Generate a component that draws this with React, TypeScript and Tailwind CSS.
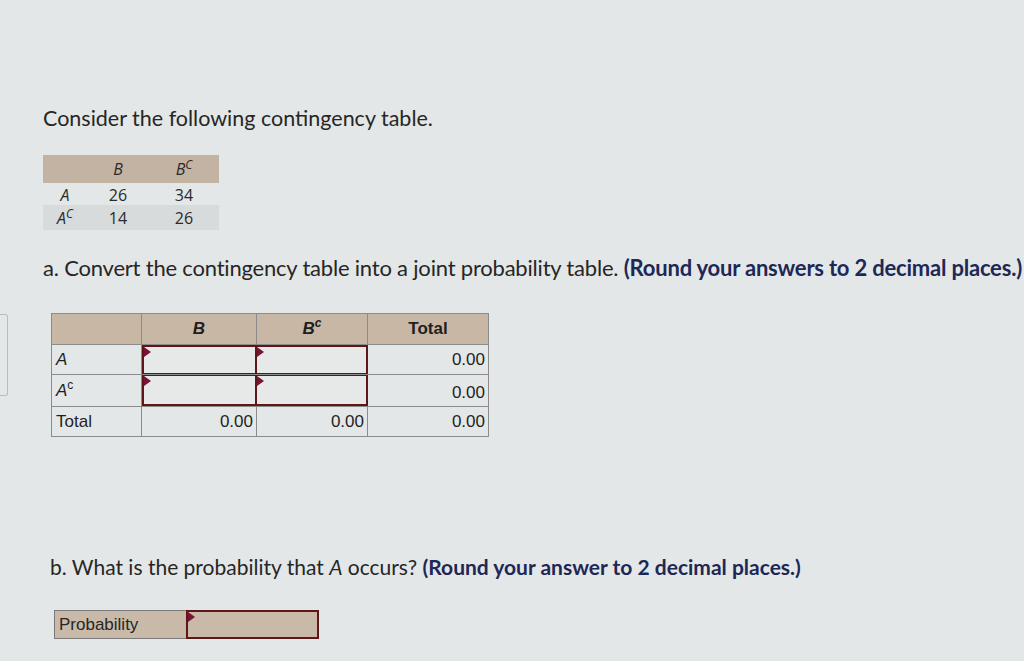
import React from "react";

const Flag = () => (
  <span className="absolute left-0 top-0 w-0 h-0 border-t-[5px] border-b-[5px] border-l-[7px] border-t-transparent border-b-transparent border-l-[#7a1232]" />
);

const InputCell = ({ cls }: { cls: string }) => (
  <div className={`relative ${cls} border-[#5e1616] bg-[#e6e9e8]`}>
    <Flag />
  </div>
);

export default function App() {
  const lato = { fontFamily: "Lato, 'Open Sans', sans-serif" };
  const arial = { fontFamily: "'Liberation Sans', Arial, sans-serif" };
  const cellB = "border-[#8c8c8c]";
  return (
    <div className="w-[1024px] h-[661px] bg-[#e4e7e7] overflow-hidden text-[#262626] relative">
      <div className="absolute left-0 top-[314px] w-[8px] h-[82px] border border-[#b9bcbc] rounded-r-[3px] border-l-0" />
      <div className="pl-[43px] pt-[105px]" style={lato}>
        <p className="text-[21.5px] leading-[26px] whitespace-nowrap">Consider the following contingency table.</p>

        <div className="mt-[24px] w-[176px] text-[16px] text-[#2a2a2a]" style={{ fontFamily: "'Open Sans', sans-serif" }}>
          <div className="grid grid-cols-[44px_62px_70px] h-[28px] bg-[#c3b3a2] items-center">
            <span />
            <span className="text-center italic">B</span>
            <span className="text-center italic">B<sup className="text-[12px]">C</sup></span>
          </div>
          <div className="grid grid-cols-[44px_62px_70px] h-[22px] items-center">
            <span className="text-center italic">A</span>
            <span className="text-center">26</span>
            <span className="text-center">34</span>
          </div>
          <div className="grid grid-cols-[44px_62px_70px] h-[25px] bg-[#d8dbdb] items-center">
            <span className="text-center italic">A<sup className="text-[12px]">C</sup></span>
            <span className="text-center">14</span>
            <span className="text-center">26</span>
          </div>
        </div>

        <p className="mt-[25px] text-[22px] leading-[26px] whitespace-nowrap tracking-[-0.2px]">
          a. Convert the contingency table into a joint probability table.{" "}
          <span className="font-bold text-[#1e2856]">(Round your answers to 2 decimal places.)</span>
        </p>

        <div className="mt-[32px] ml-[8px] w-[438px] border border-[#8c8c8c] text-[17px] text-[#1f1f1f]" style={arial}>
          <div className="grid grid-cols-[90px_115px_111px_120px] h-[30px] bg-[#c8b7a5]">
            <div className={`border-r ${cellB}`} />
            <div className={`border-r ${cellB} flex items-center justify-center font-bold italic`}>B</div>
            <div className={`border-r ${cellB} flex items-center justify-center font-bold italic`}>B<sup className="text-[12px] font-bold">c</sup></div>
            <div className="flex items-center justify-center font-bold">Total</div>
          </div>
          <div className="grid grid-cols-[90px_115px_111px_120px] h-[30px] border-t border-[#8c8c8c]">
            <div className={`border-r ${cellB} flex items-center pl-[4px] italic`}>A</div>
            <InputCell cls="border-t-2 border-l-2 border-r-2 border-b-[1.5px]" />
            <InputCell cls="border-t-2 border-r-2 border-b-[1.5px]" />
            <div className="flex items-end justify-end pr-[3px] pb-[2px]">0.00</div>
          </div>
          <div className="grid grid-cols-[90px_115px_111px_120px] h-[32px] border-t border-[#8c8c8c]">
            <div className={`border-r ${cellB} flex items-center pl-[4px] italic`}>A<sup className="text-[12px] not-italic">c</sup></div>
            <InputCell cls="border-t-[1.5px] border-l-2 border-r-2 border-b-2" />
            <InputCell cls="border-t-[1.5px] border-r-2 border-b-2" />
            <div className="flex items-center justify-end pr-[3px] pt-[4px]">0.00</div>
          </div>
          <div className="grid grid-cols-[90px_115px_111px_120px] h-[30px] border-t border-[#8c8c8c]">
            <div className={`border-r ${cellB} flex items-center pl-[4px]`}>Total</div>
            <div className={`border-r ${cellB} flex items-center justify-end pr-[3px]`}>0.00</div>
            <div className={`border-r ${cellB} flex items-center justify-end pr-[3px]`}>0.00</div>
            <div className="flex items-center justify-end pr-[3px]">0.00</div>
          </div>
        </div>

        <p className="mt-[117px] ml-[7px] text-[21px] leading-[26px] whitespace-nowrap">
          b. What is the probability that <span className="italic">A</span> occurs?{" "}
          <span className="font-bold text-[#1e2856]">(Round your answer to 2 decimal places.)</span>
        </p>

        <div className="mt-[30px] ml-[11px] w-[265px] h-[29px] flex border border-[#7a7a7a] bg-[#c9b9a9] text-[17px]" style={arial}>
          <div className="w-[132px] flex items-center pl-[4px] border-r border-[#7a6a5a]">Probability</div>
          <div className="relative flex-1 border-2 border-[#5e1616] -m-px">
            <Flag />
          </div>
        </div>
      </div>
    </div>
  );
}
